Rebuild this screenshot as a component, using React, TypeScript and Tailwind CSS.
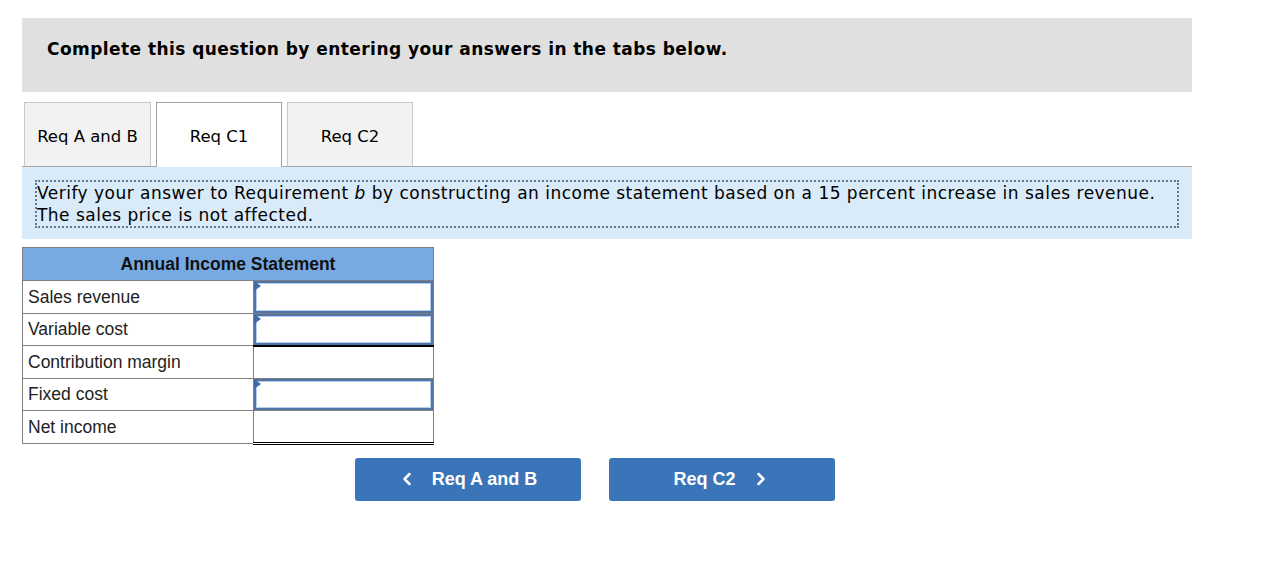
import { ChevronLeft, ChevronRight } from "lucide-react";

const rows = [
  { label: "Sales revenue", input: true, border: "" },
  { label: "Variable cost", input: true, border: "" },
  { label: "Contribution margin", input: false, border: "top" },
  { label: "Fixed cost", input: true, border: "" },
  { label: "Net income", input: false, border: "double" },
];

function InputCell() {
  return (
    <div className="relative h-full w-full border-2 border-[#4f74a5] bg-white">
      <div className="h-full w-full border border-[#b3d0f0]" />
      <span className="absolute -left-[2px] -top-[2px] h-0 w-0 border-y-[5px] border-l-[7px] border-y-transparent border-l-[#3f6aa3]" />
    </div>
  );
}

export default function App() {
  return (
    <div className="min-h-[571px] w-[1277px] bg-white pt-[18px] font-['DejaVu_Sans',Verdana,sans-serif] text-black">
      <div className="ml-[22px] w-[1170px]">
        {/* Header */}
        <div className="flex h-[74px] bg-[#e0e0e0] pl-[25px] pt-[19px]">
          <h1 className="text-[17px] font-bold tracking-[0.44px]">
            Complete this question by entering your answers in the tabs below.
          </h1>
        </div>

        {/* Tabs */}
        <div className="mt-[10px] flex gap-[5px] border-b border-[#a8a8a8] pl-[2px]">
          <div className="flex h-[64px] w-[127px] items-center justify-center border border-b-0 border-[#c8c8c8] bg-[#f2f2f2] pt-[5px] text-[16.5px]">
            Req A and B
          </div>
          <div className="-mb-px flex h-[65px] w-[126px] items-center justify-center border border-b-0 border-[#a0a0a0] bg-white pt-[4px] text-[16.5px]">
            Req C1
          </div>
          <div className="flex h-[64px] w-[126px] items-center justify-center border border-b-0 border-[#c8c8c8] bg-[#f2f2f2] pt-[5px] text-[16.5px]">
            Req C2
          </div>
        </div>

        {/* Instruction */}
        <div className="bg-[#d9ebf8] px-[13px] pb-[11px] pt-[13px]">
          <p className="border-2 border-dotted border-[#5d7a99] text-[17px] leading-[22px] tracking-[0.48px]">
            Verify your answer to Requirement <i>b</i> by constructing an income statement based on a 15 percent increase in sales revenue.
            <br />
            The sales price is not affected.
          </p>
        </div>

        {/* Table */}
        <table className="mt-[8px] w-[412px] border-collapse font-['Liberation_Sans',Arial,sans-serif] text-[17.5px]">
          <thead>
            <tr>
              <th
                colSpan={2}
                className="h-[33px] border border-[#7f7f7f] bg-[#77aae3] text-center font-bold text-[#111]"
              >
                Annual Income Statement
              </th>
            </tr>
          </thead>
          <tbody>
            {rows.map((r) => (
              <tr key={r.label} className="h-[32.6px]">
                <td className="w-[231px] border border-[#7f7f7f] px-[5px] text-[#222]">{r.label}</td>
                <td
                  className={
                    "h-[32.6px] border border-[#7f7f7f] p-0" +
                    (r.border === "top" ? " border-t-2 border-t-black" : "") +
                    (r.border === "double" ? " border-b-[3px] border-double border-b-black" : "")
                  }
                >
                  {r.input ? <InputCell /> : null}
                </td>
              </tr>
            ))}
          </tbody>
        </table>

        {/* Nav buttons */}
        <div className="mt-[13px] flex gap-[28px] pl-[333px] font-['Liberation_Sans',Arial,sans-serif]">
          <button className="flex h-[43px] w-[226px] items-center justify-center gap-[15px] rounded-[3px] bg-[#3a75b9] pr-[2px] text-[18px] font-bold text-white">
            <ChevronLeft className="h-[20px] w-[20px]" strokeWidth={3} />
            Req A and B
          </button>
          <button className="flex h-[43px] w-[226px] items-center justify-center gap-[15px] rounded-[3px] bg-[#3a75b9] text-[18px] font-bold text-white">
            Req C2
            <ChevronRight className="h-[20px] w-[20px]" strokeWidth={3} />
          </button>
        </div>
      </div>
    </div>
  );
}
